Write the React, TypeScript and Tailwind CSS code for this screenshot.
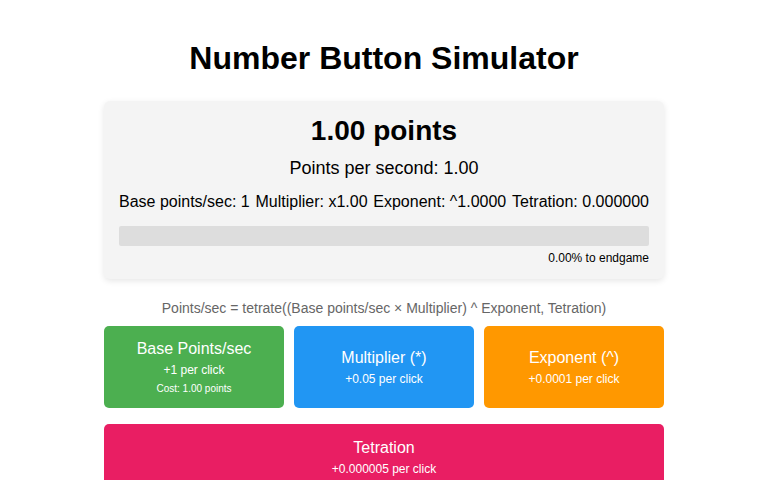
import * as React from "react";
import { useState } from "react";

type Upgrade = {
  title: string;
  gain: string;
  cost?: string;
  color: string;
};

const upgrades: Upgrade[] = [
  { title: "Base Points/sec", gain: "+1 per click", cost: "Cost: 1.00 points", color: "bg-[#4caf50]" },
  { title: "Multiplier (*)", gain: "+0.05 per click", color: "bg-[#2196f3]" },
  { title: "Exponent (^)", gain: "+0.0001 per click", color: "bg-[#ff9800]" },
];

const UpgradeButton = ({ up }: { up: Upgrade }) => (
  <button
    className={`${up.color} flex h-[82px] flex-col items-center justify-center rounded-[5px] text-white`}
  >
    <span className="text-[16px] leading-[20px]">{up.title}</span>
    <span className="mt-[4px] text-[12px] leading-[15px]">{up.gain}</span>
    {up.cost && <span className="mt-[5px] text-[10px] leading-[12px]">{up.cost}</span>}
  </button>
);

export default function App() {
  const [points] = useState(1);

  return (
    <div className="min-h-[480px] bg-white font-['Liberation_Sans',Arial,sans-serif] text-black">
      <div className="mx-auto w-[560px]">
        <h1 className="pt-[40px] text-center text-[32px] font-bold leading-[37px]">
          Number Button Simulator
        </h1>

        <div className="mt-[24px] rounded-[6px] bg-[#f4f4f4] px-[15px] pt-[14px] pb-[14px] shadow-[0_2px_6px_rgba(0,0,0,0.1)]">
          <div className="text-center text-[28px] font-bold leading-[32px]">
            {points.toFixed(2)} points
          </div>
          <div className="mt-[11px] text-center text-[18px] leading-[21px]">
            Points per second: 1.00
          </div>
          <div className="mt-[13px] flex justify-between text-[16px] leading-[19px]">
            <span>Base points/sec: 1</span>
            <span>Multiplier: x1.00</span>
            <span>Exponent: ^1.0000</span>
            <span>Tetration: 0.000000</span>
          </div>
          <div className="mt-[15px] h-[20px] rounded-[2px] bg-[#dddddd]" />
          <div className="mt-[5px] text-right text-[12px] leading-[14px]">0.00% to endgame</div>
        </div>

        <p className="mt-[21px] text-center text-[14px] leading-[16px] text-[#666666]">
          Points/sec = tetrate((Base points/sec × Multiplier) ^ Exponent, Tetration)
        </p>

        <div className="mt-[10px] grid grid-cols-3 gap-[10px]">
          {upgrades.map((u) => (
            <UpgradeButton key={u.title} up={u} />
          ))}
        </div>

        <button className="mt-[16px] flex h-[66px] w-full flex-col items-center justify-center rounded-[5px] bg-[#e91e63] text-white">
          <span className="text-[16px] leading-[20px]">Tetration</span>
          <span className="mt-[4px] text-[12px] leading-[15px]">+0.000005 per click</span>
        </button>
      </div>
    </div>
  );
}
